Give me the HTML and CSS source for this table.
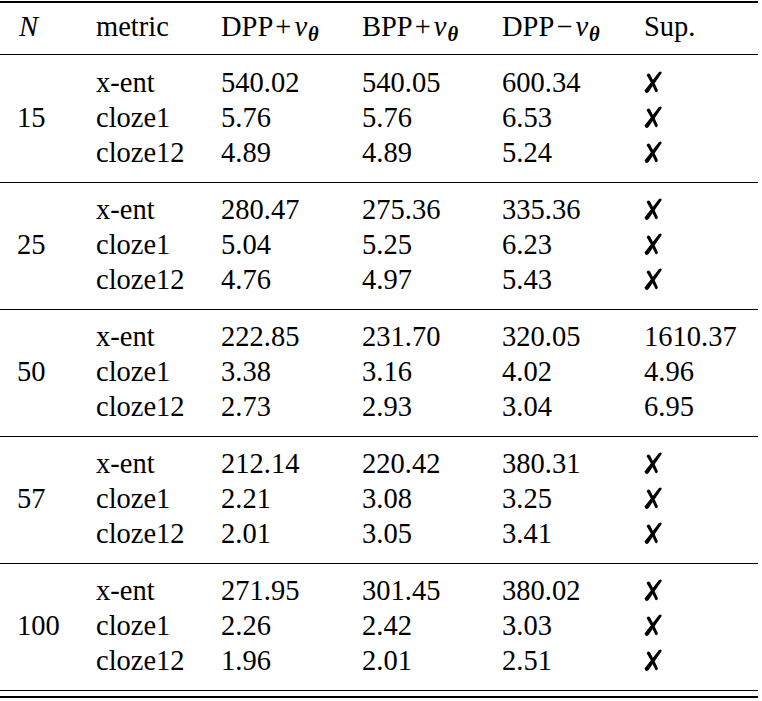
FILE: index.html
```html
<!DOCTYPE html>
<html lang="en">
<head>
<meta charset="utf-8">
<title>Results table</title>
<link rel="stylesheet" href="styles.css">
</head>
<body>
<svg class="defs" width="0" height="0" aria-hidden="true">
  <symbol id="xm" viewBox="0 0 18 22">
    <path d="M0.5,19.4 L15,1 Q17.5,-0.6 17.7,2 L4.4,21.2 Q1.8,23.4 0.5,19.4 Z"/>
    <path d="M2.6,4.2 Q3.7,1.4 6.1,3.4 C8.4,7.5 11.4,13.5 13.8,19.1 Q14,21.7 11.5,21.1 C9.1,15.5 5.9,9.5 2.6,4.2 Z"/>
  </symbol>
</svg>
<div class="page">
<table class="results">
  <colgroup>
    <col class="c-n"><col class="c-metric"><col class="c-v1"><col class="c-v2"><col class="c-v3"><col class="c-sup">
  </colgroup>
  <thead>
    <tr>
      <th><i class="var">N</i></th>
      <th>metric</th>
      <th>DPP<span class="op">+</span><i class="nu">ν</i><sub class="th">θ</sub></th>
      <th>BPP<span class="op">+</span><i class="nu">ν</i><sub class="th">θ</sub></th>
      <th>DPP<span class="op">−</span><i class="nu">ν</i><sub class="th">θ</sub></th>
      <th>Sup.</th>
    </tr>
  </thead>
  <tbody class="first">
    <tr><td></td><td>x-ent</td><td>540.02</td><td>540.05</td><td>600.34</td><td><svg class="xmark" aria-label="✗"><use href="#xm"/></svg></td></tr>
    <tr><td>15</td><td>cloze1</td><td>5.76</td><td>5.76</td><td>6.53</td><td><svg class="xmark" aria-label="✗"><use href="#xm"/></svg></td></tr>
    <tr><td></td><td>cloze12</td><td>4.89</td><td>4.89</td><td>5.24</td><td><svg class="xmark" aria-label="✗"><use href="#xm"/></svg></td></tr>
  </tbody>
  <tbody>
    <tr><td></td><td>x-ent</td><td>280.47</td><td>275.36</td><td>335.36</td><td><svg class="xmark" aria-label="✗"><use href="#xm"/></svg></td></tr>
    <tr><td>25</td><td>cloze1</td><td>5.04</td><td>5.25</td><td>6.23</td><td><svg class="xmark" aria-label="✗"><use href="#xm"/></svg></td></tr>
    <tr><td></td><td>cloze12</td><td>4.76</td><td>4.97</td><td>5.43</td><td><svg class="xmark" aria-label="✗"><use href="#xm"/></svg></td></tr>
  </tbody>
  <tbody>
    <tr><td></td><td>x-ent</td><td>222.85</td><td>231.70</td><td>320.05</td><td>1610.37</td></tr>
    <tr><td>50</td><td>cloze1</td><td>3.38</td><td>3.16</td><td>4.02</td><td>4.96</td></tr>
    <tr><td></td><td>cloze12</td><td>2.73</td><td>2.93</td><td>3.04</td><td>6.95</td></tr>
  </tbody>
  <tbody>
    <tr><td></td><td>x-ent</td><td>212.14</td><td>220.42</td><td>380.31</td><td><svg class="xmark" aria-label="✗"><use href="#xm"/></svg></td></tr>
    <tr><td>57</td><td>cloze1</td><td>2.21</td><td>3.08</td><td>3.25</td><td><svg class="xmark" aria-label="✗"><use href="#xm"/></svg></td></tr>
    <tr><td></td><td>cloze12</td><td>2.01</td><td>3.05</td><td>3.41</td><td><svg class="xmark" aria-label="✗"><use href="#xm"/></svg></td></tr>
  </tbody>
  <tbody>
    <tr><td></td><td>x-ent</td><td>271.95</td><td>301.45</td><td>380.02</td><td><svg class="xmark" aria-label="✗"><use href="#xm"/></svg></td></tr>
    <tr><td>100</td><td>cloze1</td><td>2.26</td><td>2.42</td><td>3.03</td><td><svg class="xmark" aria-label="✗"><use href="#xm"/></svg></td></tr>
    <tr><td></td><td>cloze12</td><td>1.96</td><td>2.01</td><td>2.51</td><td><svg class="xmark" aria-label="✗"><use href="#xm"/></svg></td></tr>
  </tbody>
</table>
<div class="endrule"></div>
</div>
</body>
</html>
```
FILE: styles.css
```css
html, body {
  margin: 0;
  padding: 0;
  background: #ffffff;
}

body {
  font-family: "Liberation Serif", "Times New Roman", serif;
  font-size: 28.5px;
  color: #000000;
}

.defs {
  position: absolute;
  width: 0;
  height: 0;
  overflow: hidden;
}

.page {
  padding-top: 1px;
  width: 758px;
}

.results {
  border-collapse: separate;
  border-spacing: 0;
  table-layout: fixed;
  width: 758px;
}

.c-n { width: 96px; }
.c-metric { width: 125px; }
.c-v1 { width: 141px; }
.c-v2 { width: 140px; }
.c-v3 { width: 142px; }
.c-sup { width: 114px; }

.results th,
.results td {
  padding: 0;
  text-align: left;
  font-weight: normal;
  line-height: 35px;
  white-space: nowrap;
  vertical-align: baseline;
}

.results th {
  line-height: 36px;
}

.results th:first-child,
.results td:first-child {
  padding-left: 17px;
}

.results thead th {
  border-top: 2px solid #000;
  border-bottom: 1px solid #000;
  padding-top: 6px;
  padding-bottom: 9px;
}

.results tbody tr:first-child td {
  padding-top: 9px;
}

.results tbody.first tr:first-child td {
  padding-top: 10px;
}

.results tbody tr:last-child td {
  padding-bottom: 12px;
  border-bottom: 1px solid #000;
}

.var {
  font-style: italic;
  padding-left: 2px;
}

.op {
  padding: 0 3px 0 2px;
}

.nu {
  font-style: italic;
}

.th {
  font-style: italic;
  font-weight: bold;
  font-size: 0.72em;
  line-height: 0;
  vertical-align: -0.22em;
  padding-left: 1px;
}

.xmark {
  display: inline-block;
  width: 18px;
  height: 22px;
  vertical-align: -1px;
  fill: #000;
}

.endrule {
  margin-top: 5px;
  height: 2px;
  background: #000;
  width: 758px;
}
```
